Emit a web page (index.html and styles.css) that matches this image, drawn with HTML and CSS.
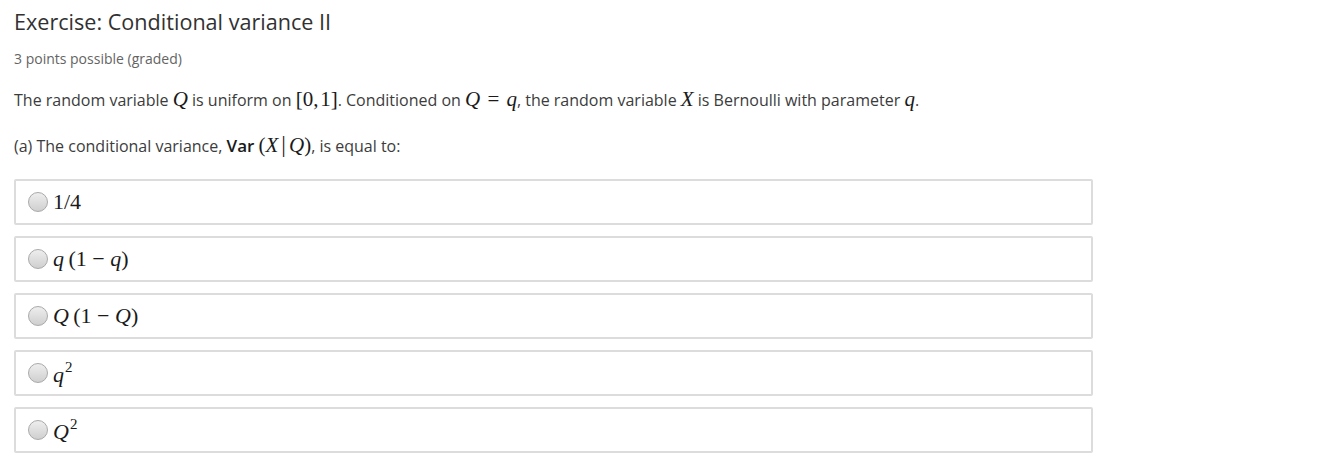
FILE: index.html
```html
<!DOCTYPE html>
<html>
<head>
<meta charset="utf-8">
<link rel="stylesheet" href="styles.css">
</head>
<body>
<div class="problem">
  <h2 class="title">Exercise: Conditional variance II</h2>
  <div class="points">3 points possible (graded)</div>
  <p class="text">The random variable <span class="mi">Q</span> is uniform on <span class="mn">[0,&#8202;1]</span>. Conditioned on <span class="mi">Q</span> <span class="mo">=</span> <span class="mi">q</span>, the random variable <span class="mi">X</span> is Bernoulli with parameter <span class="mi">q</span>.</p>
  <p class="text part">(a) The conditional variance, <span class="var">Var</span> <span class="mn">(</span><span class="mi">X</span><span class="mn bar">|</span><span class="mi">Q</span><span class="mn">)</span>, is equal to:</p>
  <div class="choices">
    <label class="choice"><span class="radio"></span><span class="math"><span class="mn">1/4</span></span></label>
    <label class="choice"><span class="radio"></span><span class="math"><span class="mi">q</span><span class="mn">&#8201;(1 − </span><span class="mi">q</span><span class="mn">)</span></span></label>
    <label class="choice"><span class="radio"></span><span class="math"><span class="mi">Q</span><span class="mn">&#8201;(1 − </span><span class="mi">Q</span><span class="mn">)</span></span></label>
    <label class="choice"><span class="radio"></span><span class="math"><span class="mi">q</span><sup class="sup">2</sup></span></label>
    <label class="choice"><span class="radio"></span><span class="math"><span class="mi">Q</span><sup class="sup">2</sup></span></label>
  </div>
</div>
</body>
</html>
```
FILE: styles.css
```css
html, body {
  margin: 0;
  padding: 0;
  background: #fff;
}
body {
  font-family: "Open Sans", "Liberation Sans", sans-serif;
  color: #3c3c3c;
}
.problem {
  padding: 0 14px;
  width: 1079px;
}
.title {
  margin: 0;
  padding-top: 7px;
  font-size: 21.6px;
  font-weight: 400;
  line-height: 30px;
  color: #313131;
}
.points {
  margin-top: 12px;
  font-size: 14px;
  line-height: 20px;
  color: #646464;
}
.text {
  margin: 0;
  margin-top: 19px;
  font-size: 16px;
  line-height: 24px;
}
.text.part {
  margin-top: 21px;
  height: 24px;
}
.mi {
  font-family: "Liberation Serif", "DejaVu Serif", serif;
  font-style: italic;
  font-size: 21px;
  line-height: 1;
  color: #1a1a1a;
}
.mn, .mo {
  font-family: "Liberation Serif", "DejaVu Serif", serif;
  font-size: 21px;
  line-height: 1;
  color: #1a1a1a;
}
.mo {
  margin: 0 3px;
}
.var {
  font-size: 17px;
  font-weight: 600;
  line-height: 1;
  color: #1a1a1a;
}
.bar {
  margin: 0 3px;
  font-size: 23px;
}
.choices {
  margin-top: 22px;
  display: flex;
  flex-direction: column;
  gap: 11px;
}
.choice {
  display: flex;
  align-items: center;
  gap: 5px;
  height: 42px;
  padding: 0 12px;
  border: 2px solid #dcdcdc;
  border-radius: 2px;
}
.math {
  line-height: 1;
  white-space: nowrap;
}
.choice .mi, .choice .mn {
  font-size: 22px;
}
.radio {
  width: 18px;
  height: 18px;
  border-radius: 50%;
  border: 1px solid #a9a9a9;
  background: linear-gradient(#eeeeee, #cfcfcf);
  flex: none;
}
.sup {
  font-family: "Liberation Serif", "DejaVu Serif", serif;
  font-size: 15px;
  line-height: 1;
  vertical-align: 10px;
  margin-left: 1px;
  color: #1a1a1a;
}
```
